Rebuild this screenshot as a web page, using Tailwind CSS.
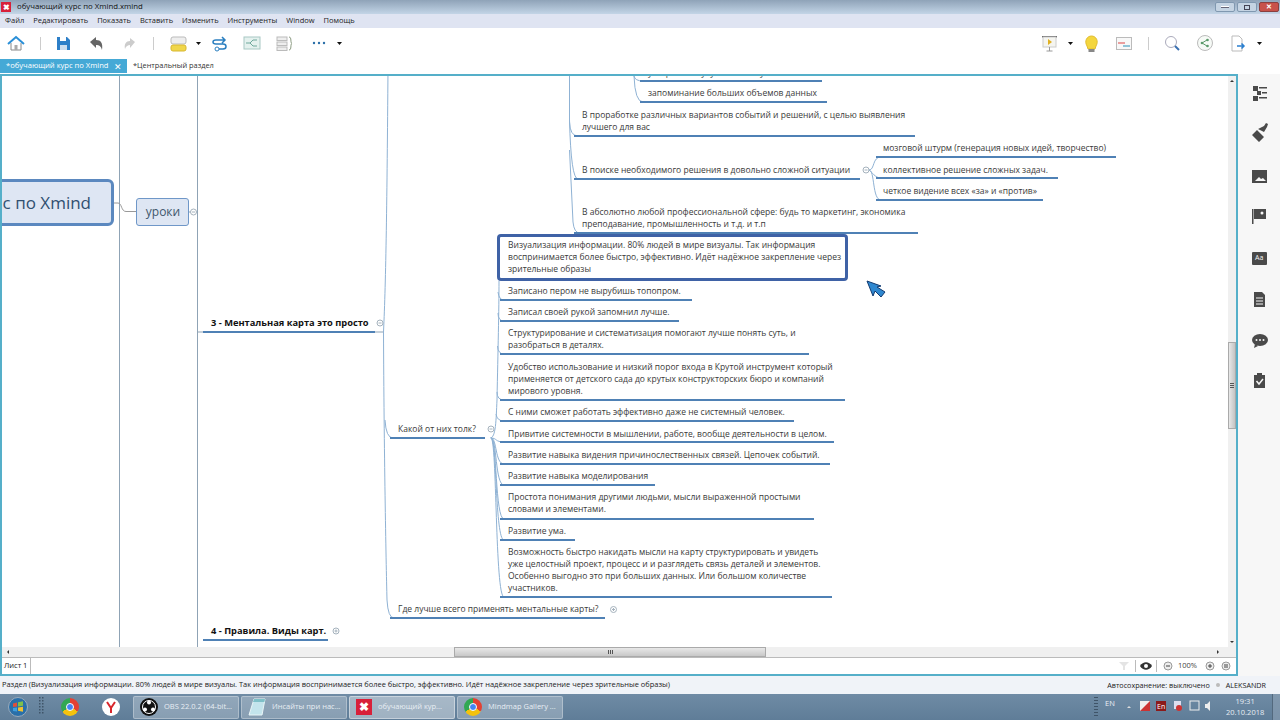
<!DOCTYPE html>
<html><head><meta charset="utf-8"><script src="https://cdn.jsdelivr.net/npm/@tailwindcss/browser@4"></script></head>
<body class="w-[1280px] h-[720px] overflow-hidden bg-[#f5f6f8] font-['Open_Sans',sans-serif] text-[#222]">
<div class="flex flex-col h-[720px]">
<div class="h-[14px] bg-gradient-to-b from-[#8fa3b8] to-[#c3d5e7] flex items-center text-[7.8px] text-[#111]">
  <div class="w-[10px] h-[10px] ml-[1px] mr-[6px] bg-[#d8203a] text-white text-[8px] font-bold leading-[10px] text-center">✖</div><span>обучающий курс по Xmind.xmind</span>
  <div class="ml-auto flex gap-[2px] mr-[1px]">
    <div class="w-[20px] h-[10px] bg-[#c5d4e3] border border-[#8098b0] rounded-[2px] flex items-center justify-center"><div class="w-[8px] h-[2px] bg-white border-b border-[#667]"></div></div>
    <div class="w-[20px] h-[10px] bg-[#c5d4e3] border border-[#8098b0] rounded-[2px] flex items-center justify-center"><div class="w-[6px] h-[5px] border border-[#445]"></div></div>
    <div class="w-[20px] h-[10px] bg-[#c8524a] border border-[#8a4040] rounded-[2px] text-white text-[7px] leading-[8px] text-center font-bold">✕</div>
  </div>
</div>
<div class="h-[14px] bg-[#dfe4f2] flex items-center px-[5px] text-[7.5px] text-[#222]"><span>Файл</span><span class="ml-[9px]">Редактировать</span><span class="ml-[9px]">Показать</span><span class="ml-[9px]">Вставить</span><span class="ml-[9px]">Изменить</span><span class="ml-[9px]">Инструменты</span><span class="ml-[9px]">Window</span><span class="ml-[9px]">Помощь</span></div>
<div class="h-[30px] bg-white flex items-center relative">
  <svg width="1280" height="30" viewBox="0 28 1280 30">
    <path d="M8 44l8-7 8 7" fill="none" stroke="#2a8fd8" stroke-width="2"/><path d="M11 43v7h10v-7" fill="#fff" stroke="#888"/><rect x="14.500" y="45" width="3" height="5" fill="#aaa"/>
    <line x1="40.500" y1="37" x2="40.500" y2="50" stroke="#ccc"/>
    <path d="M57 37h10l3 3v10H57z" fill="#2d7fc8"/><rect x="60" y="37" width="6" height="4" fill="#fff"/><rect x="60" y="45" width="7" height="5" fill="#cde"/>
    <path d="M90 42l6-5v3c5 0 7 3 6 10-1-4-3-5-6-5v3z" fill="#666"/>
    <path d="M135 42l-5-4v3c-4 0-6 3-5 8 1-3 3-4 5-4v3z" fill="#ccc"/>
    <line x1="153.500" y1="37" x2="153.500" y2="50" stroke="#ccc"/>
    <rect x="171" y="37" width="15" height="7" rx="2" fill="#eee" stroke="#bbb"/><rect x="171" y="45" width="15" height="6" rx="2" fill="#f0d64a" stroke="#d8b830"/>
    <path d="M196 42h5l-2.500 3z" fill="#111"/>
    <path d="M216 40h9m-3-3l3 3-3 3M216 40c-4 0-4 4 0 4h7c4 0 4 5 0 5h-4" fill="none" stroke="#2b7fc0" stroke-width="1.500"/><circle cx="217" cy="49" r="2" fill="#fff" stroke="#2b7fc0"/>
    <rect x="244" y="37" width="16" height="12" fill="#e4f1ee" stroke="#a8c8c4"/><path d="M246 43h4l3-3h4m-7 3l3 3h4" fill="none" stroke="#6fa89c"/>
    <rect x="277" y="37" width="10" height="3.500" fill="#eee" stroke="#bbb"/><rect x="277" y="42" width="10" height="3.500" fill="#eee" stroke="#bbb"/><rect x="277" y="47" width="10" height="3.500" fill="#eee" stroke="#bbb"/><path d="M289 37c3 0 1 6 3 6.500-2 .5 0 6.500-3 6.500" fill="none" stroke="#8a9a80"/>
    <circle cx="314" cy="43" r="1.200" fill="#2a6fa8"/><circle cx="319" cy="43" r="1.200" fill="#2a6fa8"/><circle cx="324" cy="43" r="1.200" fill="#2a6fa8"/><path d="M337 42h5l-2.500 3z" fill="#111"/>
    <rect x="1042" y="36" width="15" height="1.500" fill="#555"/><rect x="1043" y="37" width="13" height="10" fill="#f5f5f0" stroke="#ccc"/><path d="M1048 39l4 3-4 3z" fill="#e0b020"/><path d="M1049.500 47v4m-3 0h6" stroke="#999"/>
    <path d="M1068 42h5l-2.500 3z" fill="#111"/>
    <path d="M1087 46c-3-5 0-10 4.500-10s7.500 5 4.500 10l-1 3h-7z" fill="#f4d63e" stroke="#e0bc30"/><rect x="1088.500" y="49" width="6" height="3" fill="#888"/>
    <rect x="1116.500" y="37.500" width="15" height="12" fill="#f8f8f8" stroke="#bbb"/><path d="M1118 43h7" stroke="#d44"/><path d="M1123 46h7" stroke="#2a8fb8"/>
    <line x1="1148.500" y1="37" x2="1148.500" y2="50" stroke="#ccc"/>
    <circle cx="1171" cy="42" r="5.500" fill="#fff" stroke="#aab"/><path d="M1175 46l4 4" stroke="#3a70b0" stroke-width="2"/>
    <circle cx="1205" cy="43" r="7.500" fill="#f6faf6" stroke="#bbb"/><path d="M1202 43l5-3m-5 3l5 3" stroke="#5a9a6a"/><circle cx="1202" cy="43" r="1.300" fill="#5a9a6a"/><circle cx="1207.500" cy="40" r="1.300" fill="#5a9a6a"/><circle cx="1207.500" cy="46" r="1.300" fill="#5a9a6a"/>
    <path d="M1232 36h7l3 3v12h-10z" fill="#fff" stroke="#bbb"/><path d="M1237 46h7m-2.500-2.500l2.500 2.500-2.500 2.500" fill="none" stroke="#2a7fd0" stroke-width="1.500"/>
    <path d="M1257 42h5l-2.500 3z" fill="#111"/>
  </svg>
</div>
<div class="h-[16px] bg-white flex text-[7.6px]">
  <div class="w-[127px] my-[1px] bg-[#45a9d6] text-white flex items-center pl-[6px] whitespace-nowrap"><span>*обучающий курс по Xmind</span><span class="text-[9px] leading-none ml-[5px]">✕</span></div>
  <div class="pl-[6px] flex items-center text-[#333] text-[7.4px]">*Центральный раздел</div>
</div>
<div class="flex h-[602px]">
  <div class="w-[1238px] border-2 border-[#55afc9] bg-white flex flex-col">
    <div class="flex flex-1 min-h-0">
      <div class="relative flex-1 overflow-hidden">
        <div class="absolute left-[-2px] top-[-77px] w-[1280px] h-[720px] text-[8.5px] leading-[12px] text-[#3a3a3a]">
          <svg class="absolute left-0 top-[1px]" width="1280" height="720" fill="none">
            <g stroke="#8fa3b5" stroke-width="1">
              <path d="M119.500 70V650"/><path d="M197.500 70V650"/>
              <path d="M114 203h4c4 0 3 8.500 8 8.500h10" stroke="#999"/>
              <path d="M189 212h8"/>
              <path d="M197 332H384"/>
            </g>
            <g stroke="#8fb2d4" stroke-width="1">
              <path d="M388 70C387 200 386 280 383.500 332"/>
              <path d="M383.500 332C384 450 386 560 387 600Q388 618 394 618"/>
              <path d="M385 420Q386 438 393 438"/>
              <path d="M569.500 70V122Q570 136 578 136"/>
              <path d="M569.500 120Q571 179 578 179"/>
              <path d="M569.500 150L573 222Q574 233 580 233"/>
              <path d="M634 76Q635 81 643 81M634 76Q635 102 643 102"/>
              <path d="M869 170C875 170 872 157 881 157M869 170C872 172 875 178 881 178M869 170C875 170 872 200 881 200"/>
              <path d="M490 438C496 438 496 420 497 400"/>
              <path d="M497 400C498 350 499 310 499 281"/>
              <path d="M498 292Q499 300 504 300M498 313Q498 321 504 321M497.500 346Q498 354 504 354M497 392Q497 400 504 400"/>
              <path d="M496 414Q497 421 504 421M491 438C497 438 495 442 504 442M491 438C497 438 495 464 504 464M491 438C497 438 495 485 504 485M491 438C497 438 495 519 504 519M491 438C497 438 495 540 504 540M491 438C497 438 495 597 504 597"/>
            </g>
            <g stroke="#4f81b5" stroke-width="2">
              <path d="M640 81H822M640 102H827M574 136H915M574 179H860M876 157H1116M876 178H1058M876 200H1043M574 233H918"/>
              <path d="M500 300H692M500 321H679M500 354H809M500 400H845M500 421H794M500 442H834M500 464H830M500 485H655M500 519H814M500 540H575M500 597H832"/>
              <path d="M390 438H485M390 618H605M203 332H375M203 640H328"/>
            </g>
            <g stroke="#a5b2bd" fill="#fff">
              <circle cx="193.500" cy="212" r="3"/><path d="M192 212h3"/>
              <circle cx="380" cy="323" r="3"/><path d="M378.500 323h3"/>
              <circle cx="491" cy="429" r="3"/><path d="M489.500 429h3"/>
              <circle cx="866" cy="170" r="3"/><path d="M864.500 170h3"/>
              <circle cx="613.500" cy="609.500" r="3"/><path d="M612 609.500h3M613.500 608v3" />
              <circle cx="336" cy="631" r="3"/><path d="M334.500 631h3M336 629.500v3"/>
            </g>
            <path d="M867 281l14 5-4 1 8 5-4 5-6-6-2 5z" fill="#2f88d0" stroke="#123a70" stroke-width="1"/>
          </svg>
          <div class="absolute left-[-60px] top-[180px] w-[174px] h-[47px] bg-[#dee6f3] border-[3.500px] border-[#5b88bf] rounded-[6px] flex items-center justify-end pr-[20px] text-[17px] font-medium text-[#2f4f70] whitespace-nowrap">с по Xmind</div>
          <div class="absolute left-[136px] top-[199px] w-[53px] h-[28px] bg-[#dee6f3] border-[1.500px] border-[#6f97c8] rounded-[3px] flex items-center justify-center text-[12px] text-[#40566c] pl-[1px]">уроки</div>
          <div class="absolute left-[497px] top-[235px] w-[351px] h-[47px] bg-white border-[3px] border-[#3f62a6] rounded-[4px]"></div>
          <p class="absolute left-[648px] top-[68px] whitespace-nowrap">ускорение и улучшение обучения</p>
          <p class="absolute left-[648px] top-[88px] whitespace-nowrap">запоминание больших объемов данных</p>
          <p class="absolute left-[582px] top-[110px] whitespace-nowrap">В проработке различных вариантов событий и решений, с целью выявления<br>лучшего для вас</p>
          <p class="absolute left-[582px] top-[165px] whitespace-nowrap">В поиске необходимого решения в довольно сложной ситуации</p>
          <p class="absolute left-[883px] top-[143px] whitespace-nowrap">мозговой штурм (генерация новых идей, творчество)</p>
          <p class="absolute left-[883px] top-[165px] whitespace-nowrap">коллективное решение сложных задач.</p>
          <p class="absolute left-[883px] top-[186px] whitespace-nowrap">четкое видение всех «за» и «против»</p>
          <p class="absolute left-[582px] top-[207px] whitespace-nowrap">В абсолютно любой профессиональной сфере: будь то маркетинг, экономика<br>преподавание, промышленность и т.д. и т.п</p>
          <p class="absolute left-[508px] top-[240px] whitespace-nowrap">Визуализация информации. 80% людей в мире визуалы. Так информация<br>воспринимается более быстро, эффективно. Идёт надёжное закрепление через<br>зрительные образы</p>
          <p class="absolute left-[508px] top-[286px] whitespace-nowrap">Записано пером не вырубишь топопром.</p>
          <p class="absolute left-[508px] top-[307px] whitespace-nowrap">Записал своей рукой запомнил лучше.</p>
          <p class="absolute left-[508px] top-[328px] whitespace-nowrap">Структурирование и систематизация помогают лучше понять суть, и<br>разобраться в деталях.</p>
          <p class="absolute left-[508px] top-[362px] whitespace-nowrap">Удобство использование и низкий порог входа в Крутой инструмент который<br>применяется от детского сада до крутых конструкторских бюро и компаний<br>мирового уровня.</p>
          <p class="absolute left-[508px] top-[407px] whitespace-nowrap">С ними сможет работать эффективно даже не системный человек.</p>
          <p class="absolute left-[508px] top-[429px] whitespace-nowrap">Привитие системности в мышлении, работе, вообще деятельности в целом.</p>
          <p class="absolute left-[508px] top-[450px] whitespace-nowrap">Развитие навыка видения причинослественных связей. Цепочек событий.</p>
          <p class="absolute left-[508px] top-[471px] whitespace-nowrap">Развитие навыка моделирования</p>
          <p class="absolute left-[508px] top-[492px] whitespace-nowrap">Простота понимания другими людьми, мысли выраженной простыми<br>словами и элементами.</p>
          <p class="absolute left-[508px] top-[526px] whitespace-nowrap">Развитие ума.</p>
          <p class="absolute left-[508px] top-[547px] whitespace-nowrap">Возможность быстро накидать мысли на карту структурировать и увидеть<br>уже целостный проект, процесс и и разглядеть связь деталей и элементов.<br>Особенно выгодно это при больших данных. Или большом количестве<br>участников.</p>
          <p class="absolute left-[398px] top-[424px] whitespace-nowrap">Какой от них толк?</p>
          <p class="absolute left-[398px] top-[604px] whitespace-nowrap">Где лучше всего применять ментальные карты?</p>
          <p class="absolute left-[211px] top-[318px] whitespace-nowrap font-bold text-[#111] text-[9.300px]">3 - Ментальная карта это просто</p>
          <p class="absolute left-[211px] top-[626px] whitespace-nowrap font-bold text-[#111] text-[9.300px]">4 - Правила. Виды карт.</p>
        </div>
      </div>
      <div class="w-[8px] bg-[#f0f0f0] relative">
        <svg class="absolute left-0 top-[2px]" width="8" height="6"><path d="M2 4l2-2 2 2z" fill="#333"/></svg>
        <svg class="absolute left-0 bottom-[2px]" width="8" height="6"><path d="M2 2l2 2 2-2z" fill="#333"/></svg>
        <div class="absolute top-[266px] left-0 w-[8px] h-[87px] bg-gradient-to-r from-[#e8e8e8] to-[#c4c4c4] border border-[#aaa] flex flex-col items-center justify-center gap-[1px]"><div class="w-[4px] h-px bg-[#555]"></div><div class="w-[4px] h-px bg-[#555]"></div><div class="w-[4px] h-px bg-[#555]"></div></div>
      </div>
    </div>
    <div class="h-[10px] bg-[#f0f0f0] relative shrink-0">
      <svg class="absolute left-[3px] top-[2px]" width="6" height="6"><path d="M4 1L2 3l2 2z" fill="#333"/></svg>
      <svg class="absolute left-[1213px] top-[2px]" width="6" height="6"><path d="M2 1l2 2-2 2z" fill="#333"/></svg>
      <div class="absolute left-[452px] top-0 w-[312px] h-[10px] bg-gradient-to-b from-[#e8e8e8] to-[#c8c8c8] border border-[#aaa] flex items-center justify-center gap-[1px]"><div class="w-px h-[4px] bg-[#555]"></div><div class="w-px h-[4px] bg-[#555]"></div><div class="w-px h-[4px] bg-[#555]"></div></div>
    </div>
    <div class="h-[17px] border-t border-[#bbb] bg-white flex items-center text-[7.5px] shrink-0">
      <div class="w-[29px] h-full border-r border-[#bbb] flex items-center pl-[2px] whitespace-nowrap">Лист 1</div>
      <div class="ml-auto flex items-center pr-[5px] text-[#444]">
        <svg width="12" height="10"><path d="M1 1h10L7 5v4H5V5z" fill="#e4e4e4"/></svg>
        <span class="ml-[5px] w-px h-[12px] bg-[#bbb]"></span>
        <svg class="ml-[3px]" width="14" height="10"><path d="M1 5c3-5 9-5 12 0-3 5-9 5-12 0z" fill="#333"/><circle cx="7" cy="5" r="2" fill="#fff"/></svg>
        <span class="ml-[3px] w-px h-[12px] bg-[#bbb]"></span>
        <svg class="ml-[6px]" width="10" height="10"><circle cx="5" cy="5" r="4" fill="#eee" stroke="#999"/><path d="M3 5h4" stroke="#444"/></svg>
        <span class="ml-[5px] w-[19px] whitespace-nowrap">100%</span>
        <svg class="ml-[8px]" width="10" height="10"><circle cx="5" cy="5" r="4" fill="#eee" stroke="#999"/><path d="M3 5h4M5 3v4" stroke="#444"/></svg>
        <svg class="ml-[6px]" width="10" height="10"><circle cx="5" cy="5" r="4" fill="#eee" stroke="#999"/><path d="M3 4h4M3 6h4" stroke="#444"/></svg>
      </div>
    </div>
  </div>
  <div class="flex-1 bg-[#f7f7f7]">
    <svg width="42" height="602" viewBox="1238 74 42 602" fill="#4a4a4a">
      <rect x="1253" y="86" width="5" height="5"/><rect x="1259" y="87" width="8" height="1.500"/><rect x="1257" y="91" width="4" height="4"/><rect x="1262" y="92" width="5" height="1.500"/><rect x="1253" y="96" width="5" height="5"/><rect x="1259" y="97" width="8" height="1.500"/>
      <path d="M1252 135l5-5 7 7-5 5zM1258 129l6-3 2-3 2 1-1 3-3 5z"/>
      <path d="M1252 170h15v13h-15z"/><path d="M1255 181l4-4 2 2 2-1 3 3z" fill="#f7f7f7"/>
      <path d="M1252 209h1.500v15H1252zM1254 209h12v10h-12z"/><circle cx="1262" cy="213" r="1.500" fill="#f7f7f7"/>
      <rect x="1252" y="252" width="15" height="13" rx="1"/><text x="1255" y="260" font-size="7" fill="#f7f7f7" font-family="Open Sans">Aa</text>
      <path d="M1254 292h8l3 3v12h-11z"/><path d="M1256 298h7M1256 301h7M1256 304h7" stroke="#f7f7f7"/>
      <ellipse cx="1260" cy="340" rx="8" ry="6"/><path d="M1255 344l-1 4 4-2z"/><circle cx="1256.500" cy="340" r="1" fill="#f7f7f7"/><circle cx="1260" cy="340" r="1" fill="#f7f7f7"/><circle cx="1263.500" cy="340" r="1" fill="#f7f7f7"/>
      <path d="M1254 375h3v-2h5v2h3v13h-11z"/><path d="M1256.500 381l2.500 3 4-5" fill="none" stroke="#f7f7f7" stroke-width="1.500"/>
    </svg>
  </div>
</div>
<div class="h-[18px] bg-[#f0f3f8] flex items-center justify-between px-[2px] text-[7.45px] text-[#222] whitespace-nowrap">
  <span>Раздел (Визуализация информации. 80% людей в мире визуалы. Так информация воспринимается более быстро, эффективно. Идёт надёжное закрепление через зрительные образы)</span>
  <span class="pr-[12px] flex items-center text-[7.2px]">Автосохранение: выключено<span class="w-[4px] h-[4px] rounded-full bg-[#bbb] mx-[6px]"></span>ALEKSANDR</span>
</div>
<div class="h-[26px] bg-gradient-to-b from-[#6f8ba5] to-[#5f7d98] flex items-center text-[7.5px] text-[#e8eef4] relative">
  <svg class="ml-[8px] shrink-0" width="20" height="20"><circle cx="10" cy="10" r="9.500" fill="#2a6fa8" stroke="#9ab"/><path d="M5 6.500l4-1v4l-4 .5z" fill="#e0503a"/><path d="M10 5.300l5-1v4.500l-5 .6z" fill="#7fc04a"/><path d="M5 11l4-.5v4l-4-.5z" fill="#3f9fe0"/><path d="M10 10.400l5-.6v5l-5-1z" fill="#f0c030"/></svg>
  <svg class="absolute left-[39px] top-[3px]" width="6" height="20" fill="#3f5468"><path d="M0 0h1.500v1.500H0zM3 0h1.500v1.500H3zM0 3h1.500v1.500H0zM3 3h1.500v1.500H3zM0 6h1.500v1.500H0zM3 6h1.500v1.500H3zM0 9h1.500v1.500H0zM3 9h1.500v1.500H3zM0 12h1.500v1.500H0zM3 12h1.500v1.500H3zM0 15h1.500v1.500H0zM3 15h1.500v1.500H3z"/></svg>
  <div class="ml-[33px] w-[18px] h-[18px] rounded-full bg-[conic-gradient(#e34133_0_33%,#f4c20d_33%_66%,#31a853_66%)] flex items-center justify-center"><div class="w-[8px] h-[8px] rounded-full bg-[#4285f4] border border-white"></div></div>
  <svg class="ml-[23px] shrink-0" width="18" height="18"><circle cx="9" cy="9" r="9" fill="#fff"/><path d="M5 4l4 6 4-6M9 10v5" fill="none" stroke="#d8262c" stroke-width="2"/></svg>
  <div class="ml-[13px] flex gap-[2px]">
    <div class="w-[106px] h-[23px] bg-white/25 border border-white/30 rounded-[2px] flex items-center gap-[6px] px-[6px] whitespace-nowrap overflow-hidden"><svg class="shrink-0" width="18" height="18"><circle cx="9" cy="9" r="9" fill="#111"/><circle cx="9" cy="9" r="6.500" fill="none" stroke="#fff" stroke-width="1"/><circle cx="9" cy="4.500" r="2" fill="#fff"/><circle cx="5" cy="11.500" r="2" fill="#fff"/><circle cx="13" cy="11.500" r="2" fill="#fff"/></svg>OBS 22.0.2 (64-bit...</div>
    <div class="w-[106px] h-[23px] bg-white/25 border border-white/30 rounded-[2px] flex items-center gap-[6px] px-[6px] whitespace-nowrap overflow-hidden"><svg class="shrink-0" width="18" height="18"><path d="M6 1h11l-3 16H1z" fill="#c3e4ec" stroke="#e8f4f6"/><path d="M6 1h11l-.6 3H5z" fill="#7fc0c8"/></svg>Инсайты при нас...</div>
    <div class="w-[106px] h-[23px] bg-white/40 border border-white/40 rounded-[2px] flex items-center gap-[6px] px-[6px] whitespace-nowrap overflow-hidden"><div class="w-[16px] h-[16px] bg-[#d8203a] text-white text-[12px] font-bold leading-[16px] text-center shrink-0">✖</div>обучающий кур...</div>
    <div class="w-[106px] h-[23px] bg-white/25 border border-white/30 rounded-[2px] flex items-center gap-[6px] px-[6px] whitespace-nowrap overflow-hidden"><div class="w-[18px] h-[18px] rounded-full bg-[conic-gradient(#e34133_0_33%,#f4c20d_33%_66%,#31a853_66%)] flex items-center justify-center shrink-0"><div class="w-[8px] h-[8px] rounded-full bg-[#4285f4] border border-white"></div></div>Mindmap Gallery ...</div>
  </div>
  <svg class="absolute left-[1094px] top-[3px]" width="6" height="20" fill="#3f5468"><path d="M0 0h4v1H0zM0 3h4v1H0zM0 6h4v1H0zM0 9h4v1H0zM0 12h4v1H0zM0 15h4v1H0zM0 18h4v1H0z"/></svg>
  <span class="absolute left-[1105px] top-[4px] text-[7.5px]">EN</span>
  <svg class="absolute left-[1125px] top-[4px]" width="95" height="18"><path d="M2 10l2-2 2 2z" fill="#ddd"/><rect x="15" y="3" width="10" height="10" fill="#eee"/><path d="M15 13l10-10v10z" fill="#c33"/><rect x="31" y="3" width="10" height="10" fill="#8b1a1a"/><text x="32" y="11" font-size="7" fill="#fff" font-family="Open Sans">En</text><rect x="49" y="3" width="7" height="8" fill="#dde"/><circle cx="54" cy="10" r="3" fill="#c33"/><rect x="65" y="3" width="9" height="9" fill="none" stroke="#eee"/><path d="M80 6h2l3-3v10l-3-3h-2z" fill="#eee"/></svg>
  <div class="absolute left-[1226px] top-[2px] text-center leading-[11px] text-[7.5px]">19:31<br>20.10.2018</div>
  <div class="absolute right-0 top-0 w-[8px] h-[26px] bg-[#8ea2b5]/60 border-l border-[#53697e]"></div>
</div>
</div>
</body></html>
